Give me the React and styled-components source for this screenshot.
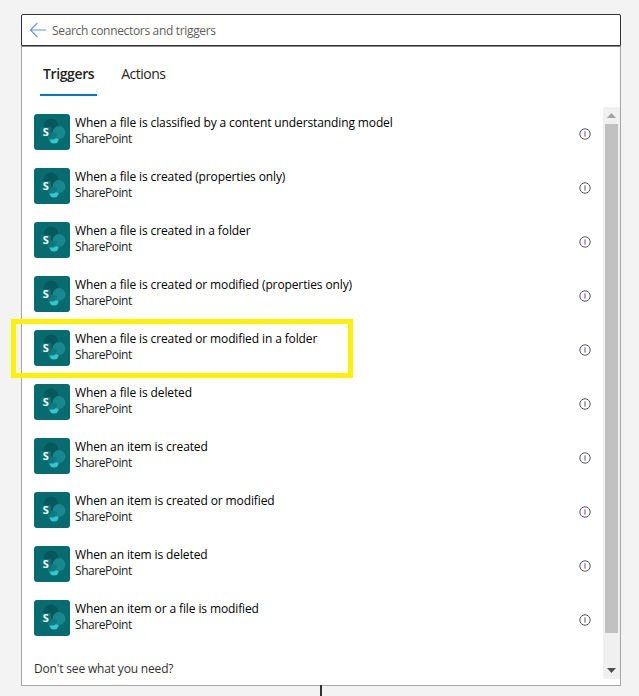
import styled, {createGlobalStyle} from "styled-components";

const triggers = [
    "When a file is classified by a content understanding model",
    "When a file is created (properties only)",
    "When a file is created in a folder",
    "When a file is created or modified (properties only)",
    "When a file is created or modified in a folder",
    "When a file is deleted",
    "When an item is created",
    "When an item is created or modified",
    "When an item is deleted",
    "When an item or a file is modified",
];

const GlobalStyle = createGlobalStyle`
  html, body {
    margin: 0;
    padding: 0;
    background: #f3f3f3;
  }
  body {
    font-family: "Open Sans", "Noto Sans", sans-serif;
    color: #252423;
  }
`;

const Page = styled.div`
  position: relative;
  box-sizing: border-box;
  width: 639px;
  height: 696px;
  padding: 14px 18px 0 21px;
  overflow: hidden;
  display: flex;
  flex-direction: column;
  align-items: flex-start;
`;

const SearchBox = styled.div`
  box-sizing: border-box;
  width: 600px;
  height: 32px;
  flex: none;
  display: flex;
  align-items: center;
  gap: 5px;
  padding-left: 7px;
  background: #fff;
  border: 1px solid #323130;
  border-radius: 2px 2px 0 0;
`;

const SearchText = styled.span`
  font-size: 12px;
  letter-spacing: -0.33px;
  color: #605e5c;
`;

const Panel = styled.div`
  box-sizing: border-box;
  width: 600px;
  height: 640px;
  flex: none;
  display: flex;
  flex-direction: column;
  background: #fff;
  border: 1px solid #a6a6a6;
  border-top: 1px solid #8a8a8a;
`;

const Tabs = styled.div`
  height: 48px;
  flex: none;
  display: flex;
  padding: 0 0 0 18px;
  gap: 21px;
`;

const Tab = styled.div`
  box-sizing: border-box;
  height: 49px;
  padding: 17px 3px 0;
  font-size: 14px;
  letter-spacing: ${p => (p.$active ? "-0.38px" : "-0.5px")};
  font-weight: ${p => (p.$active ? 600 : 400)};
  color: #252423;
  border-bottom: 2px solid ${p => (p.$active ? "#0078d4" : "transparent")};
`;

const Body = styled.div`
  flex: 1;
  min-height: 0;
  display: flex;
  align-items: flex-start;
  padding-top: 12px;
`;

const ListArea = styled.div`
  flex: 1;
  height: 576px;
  padding-top: 1px;
  overflow: hidden;
`;

const Row = styled.div`
  height: 54px;
  display: flex;
  align-items: flex-start;
  padding: 6px 0 0 12px;
  box-sizing: border-box;
`;

const IconTile = styled.svg`
  width: 36px;
  height: 36px;
  flex: none;
  display: block;
`;

const RowText = styled.div`
  flex: 1;
  min-width: 0;
  margin: 1px 0 0 5px;
`;

const RowTitle = styled.div`
  font-size: 12px;
  line-height: 16px;
  letter-spacing: -0.115px;
  font-weight: 500;
  color: #000;
`;

const RowSub = styled.div`
  font-size: 12px;
  line-height: 16px;
  letter-spacing: -0.45px;
  color: #201f1e;
`;

const InfoButton = styled.svg`
  width: 12px;
  height: 12px;
  flex: none;
  margin: 14px 12px 0 0;
`;

const Footer = styled.div`
  padding: 13px 0 0 12px;
  font-size: 12px;
  line-height: 16px;
  letter-spacing: -0.17px;
  font-weight: 500;
  color: #323130;
`;

const Scrollbar = styled.div`
  width: 17px;
  height: 572px;
  flex: none;
  display: flex;
  flex-direction: column;
  align-items: center;
  background: #f0f0f0;
`;

const ScrollArrow = styled.div`
  height: 17px;
  flex: none;
  display: flex;
  align-items: center;
  justify-content: center;
`;

const ScrollThumb = styled.div`
  width: 13px;
  height: 509px;
  flex: none;
  margin-bottom: 29px;
  background: #c1c1c1;
`;

const Highlight = styled.div`
  position: absolute;
  left: 11px;
  top: 319px;
  width: 342px;
  height: 59px;
  box-sizing: border-box;
  border: 5px solid #fff200;
`;

const Connector = styled.div`
  position: absolute;
  left: 320px;
  top: 685px;
  width: 2px;
  height: 11px;
  background: #323130;
`;

function BackArrow() {
    return (
        <svg width="18" height="16" viewBox="0 0 18 16" fill="none" stroke="#5b97e5" strokeWidth="1.1">
            <path d="M17 8H1.6M8.4 1L1.4 8l7 7"/>
        </svg>
    );
}

function SharePointIcon() {
    return (
        <IconTile viewBox="0 0 36 36">
            <rect width="36" height="36" rx="3" fill="#066c70"/>
            <circle cx="17" cy="12" r="7.4" fill="#05585c"/>
            <circle cx="20" cy="25" r="4.6" fill="#37c6d0"/>
            <circle cx="25" cy="18.5" r="6.4" fill="#17888e"/>
            <path d="M14 19h8.5a4.8 4.8 0 0 1-3.2 6.6H14z" fill="#0f7a80"/>
            <rect x="6.5" y="13" width="10.5" height="10" rx="1" fill="#0a7277"/>
            <text x="11.7" y="21.8" textAnchor="middle" fontSize="11" fontWeight="700" fontFamily="'Open Sans', sans-serif" fill="#fff">S</text>
        </IconTile>
    );
}

function InfoIcon() {
    return (
        <InfoButton viewBox="0 0 12 12" fill="none">
            <circle cx="6" cy="6" r="5.2" stroke="#55555f" strokeWidth="1"/>
            <path d="M6 3.4v5.2" stroke="#6a4a78" strokeWidth="1"/>
        </InfoButton>
    );
}

function App() {
    return (
        <>
            <GlobalStyle/>
            <Page>
                <SearchBox>
                    <BackArrow/>
                    <SearchText>Search connectors and triggers</SearchText>
                </SearchBox>
                <Panel>
                    <Tabs>
                        <Tab $active>Triggers</Tab>
                        <Tab>Actions</Tab>
                    </Tabs>
                    <Body>
                        <ListArea>
                            {triggers.map(title => (
                                <Row key={title}>
                                    <SharePointIcon/>
                                    <RowText>
                                        <RowTitle>{title}</RowTitle>
                                        <RowSub>SharePoint</RowSub>
                                    </RowText>
                                    <InfoIcon/>
                                </Row>
                            ))}
                            <Footer>Don't see what you need?</Footer>
                        </ListArea>
                        <Scrollbar>
                            <ScrollArrow>
                                <svg width="9" height="5" viewBox="0 0 9 5"><path d="M4.5 0L9 5H0z" fill="#a3a3a3"/></svg>
                            </ScrollArrow>
                            <ScrollThumb/>
                            <ScrollArrow>
                                <svg width="9" height="5" viewBox="0 0 9 5"><path d="M0 0h9L4.5 5z" fill="#505050"/></svg>
                            </ScrollArrow>
                        </Scrollbar>
                    </Body>
                </Panel>
                <Highlight/>
                <Connector/>
            </Page>
        </>
    );
}

export default App;
